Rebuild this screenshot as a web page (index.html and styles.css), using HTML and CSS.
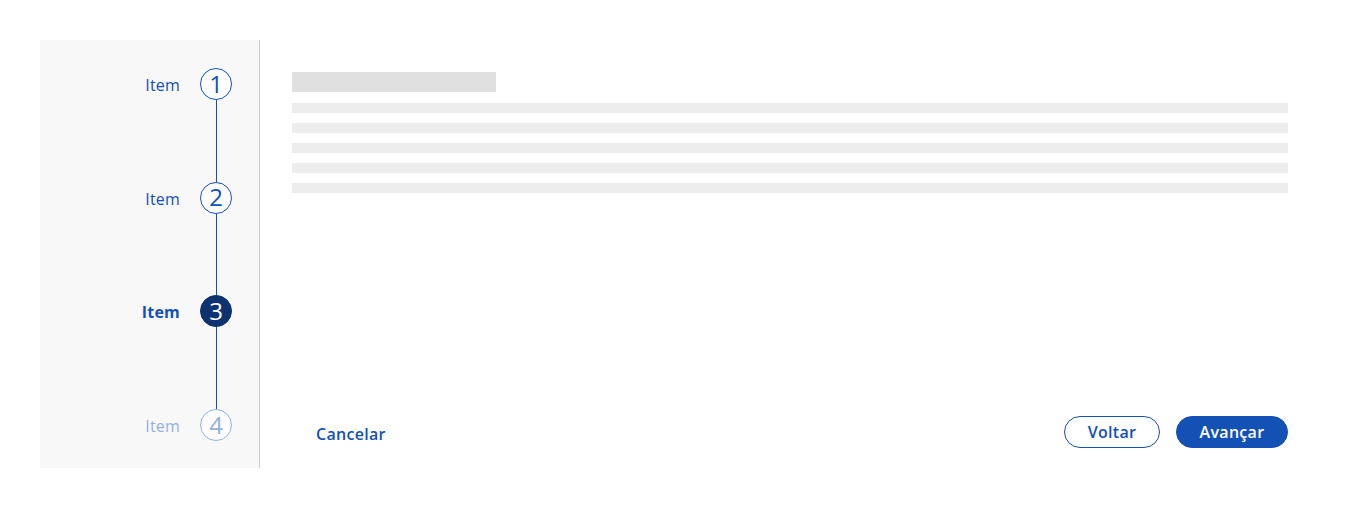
FILE: index.html
```html
<!DOCTYPE html>
<html lang="pt-BR">
<head>
<meta charset="utf-8">
<title>Wizard</title>
<link rel="stylesheet" href="styles.css">
</head>
<body>
<div class="wizard">
  <nav class="steps">
    <div class="step done">
      <span class="step-label">Item</span>
      <span class="step-num">1</span>
    </div>
    <div class="connector"></div>
    <div class="step done">
      <span class="step-label">Item</span>
      <span class="step-num">2</span>
    </div>
    <div class="connector"></div>
    <div class="step active">
      <span class="step-label">Item</span>
      <span class="step-num">3</span>
    </div>
    <div class="connector"></div>
    <div class="step disabled">
      <span class="step-label">Item</span>
      <span class="step-num">4</span>
    </div>
  </nav>
  <section class="panel">
    <div class="skeleton">
      <div class="sk-title"></div>
      <div class="sk-line"></div>
      <div class="sk-line"></div>
      <div class="sk-line"></div>
      <div class="sk-line"></div>
      <div class="sk-line"></div>
    </div>
    <div class="actions">
      <button class="btn btn-tertiary">Cancelar</button>
      <div class="actions-right">
        <button class="btn btn-secondary">Voltar</button>
        <button class="btn btn-primary">Avançar</button>
      </div>
    </div>
  </section>
</div>
</body>
</html>
```
FILE: styles.css
```css
* { box-sizing: border-box; }
html, body { margin: 0; padding: 0; background: #fff; }
body {
  font-family: "Open Sans", "Liberation Sans", sans-serif;
  color: #333;
  padding: 40px;
}
.wizard {
  display: flex;
  height: 428px;
  width: 1280px;
}
.steps {
  width: 220px;
  flex: none;
  background: #f8f8f8;
  border-right: 1px solid #cccccc;
  display: flex;
  flex-direction: column;
  padding: 28px 27px 27px 0;
}
.step {
  display: flex;
  align-items: center;
  justify-content: flex-end;
  gap: 20px;
  height: 32px;
  flex: none;
}
.step-label {
  font-size: 16px;
  color: #1351b4;
  line-height: 1;
  letter-spacing: 0.2px;
  margin-top: 2px;
}
.step-num {
  width: 32px;
  height: 32px;
  border-radius: 50%;
  border: 1px solid #1351b4;
  background: #fff;
  color: #1351b4;
  display: flex;
  align-items: center;
  justify-content: center;
  font-size: 24px;
  font-weight: 400;
  line-height: 1;
  padding-bottom: 1px;
}
.step.active .step-label { font-weight: 700; }
.step.active .step-num {
  background: #0c326f;
  border-color: #0c326f;
  color: #fff;
}
.step.disabled .step-label { color: #94b0dd; }
.step.disabled .step-num { color: #94b0dd; border-color: #94b0dd; }
.connector {
  flex: 1;
  width: 1px;
  background: #1351b4;
  align-self: flex-end;
  margin-right: 15px;
}
.panel {
  flex: 1;
  display: flex;
  flex-direction: column;
  justify-content: space-between;
  padding: 32px 32px 20px 32px;
}
.skeleton {
  display: flex;
  flex-direction: column;
  gap: 10px;
}
.sk-title {
  width: 204px;
  height: 20px;
  background: #e0e0e0;
  margin-bottom: 1px;
}
.sk-line {
  height: 10px;
  background: #ededed;
}
.actions {
  display: flex;
  align-items: center;
  justify-content: space-between;
}
.actions-right {
  display: flex;
  gap: 16px;
}
.btn {
  font-family: inherit;
  font-size: 16px;
  font-weight: 600;
  height: 32px;
  border-radius: 100px;
  padding: 0 24px;
  cursor: pointer;
  line-height: 1;
  letter-spacing: 0.3px;
}
.btn-tertiary {
  background: transparent;
  border: none;
  color: #1351b4;
  padding-top: 4px;
}
.btn-secondary {
  background: #fff;
  border: 1px solid #1351b4;
  color: #1351b4;
  width: 96px;
  padding: 0;
}
.btn-primary {
  background: #1351b4;
  border: 1px solid #1351b4;
  color: #fff;
  width: 112px;
  padding: 0;
}
```
